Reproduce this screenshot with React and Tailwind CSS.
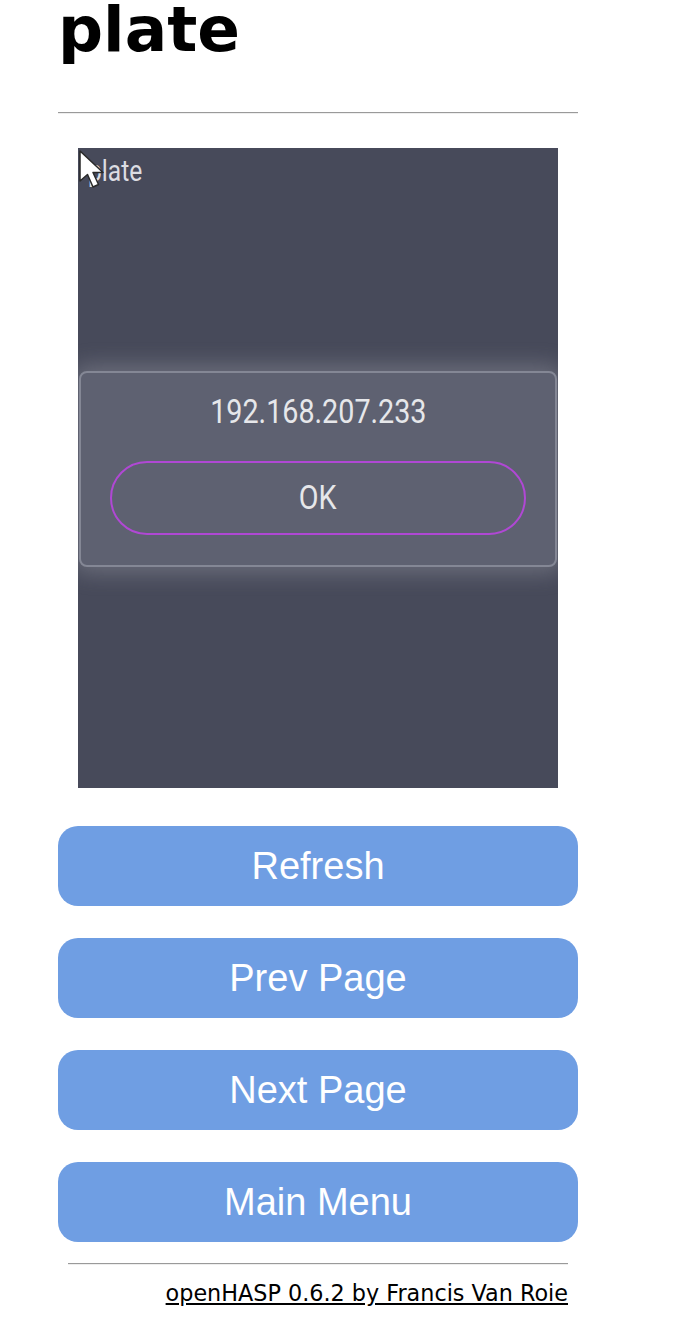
import React from "react";

function Cursor() {
  return (
    <svg width="30" height="42" viewBox="0 0 30 42" className="absolute left-[0px] top-[1px]">
      <path d="M2 2 L2 32 L9.5 25.5 L15 38 L20.5 35.5 L15 23.5 L25 23.5 Z" fill="#ffffff" stroke="#2a2a2a" strokeWidth="1.5" strokeLinejoin="round" />
    </svg>
  );
}

function Screen() {
  return (
    <div className="relative ml-[20px] mt-[34px] w-[480px] h-[640px] bg-[#474a5a] overflow-hidden">
      <div className="absolute left-[10px] top-[3px] text-[29px] text-[#dcdde2] font-['Roboto',sans-serif] origin-left scale-x-[0.85] leading-[40px]">
        plate
      </div>
      <Cursor />
      <div className="absolute left-[1px] top-[223px] w-[478px] h-[196px] rounded-[8px] bg-[#5e6171] border-2 border-[#848795] shadow-[0_0_22px_6px_rgba(200,200,210,0.28)]">
        <div className="mt-[19px] flex justify-center">
          <span className="inline-block text-[33px] leading-[40px] text-[#e6e7ea] font-['Roboto',sans-serif] scale-x-[0.87]">
            192.168.207.233
          </span>
        </div>
        <div className="ml-[29px] mt-[29px] w-[416px] h-[74px] rounded-full border-2 border-[#b048d4] flex items-center justify-center">
          <span className="inline-block text-[33px] leading-[40px] text-[#e6e7ea] font-['Roboto',sans-serif] scale-x-[0.87]">
            OK
          </span>
        </div>
      </div>
    </div>
  );
}

function Btn({ children }) {
  return (
    <div className="w-[520px] h-[80px] rounded-[20px] bg-[#6f9ee3] flex items-center justify-center text-white text-[38px] font-['Liberation_Sans',Arial,sans-serif]">
      {children}
    </div>
  );
}

export default function App() {
  return (
    <div className="w-[690px] h-[1340px] bg-white overflow-hidden">
      <div className="ml-[58px] w-[520px]">
        <h1 className="mt-[-2px] text-[63px] leading-[63px] font-bold text-black font-['DejaVu_Sans',Verdana,sans-serif]">
          plate
        </h1>
        <div className="mt-[51px] h-[2px] border-t border-t-[#9a9a9a] border-b border-b-[#eeeeee]" />
        <Screen />
        <div className="mt-[38px] flex flex-col gap-[32px]">
          <Btn>Refresh</Btn>
          <Btn>Prev Page</Btn>
          <Btn>Next Page</Btn>
          <Btn>Main Menu</Btn>
        </div>
        <div className="ml-[10px] mt-[21px] w-[500px] h-[2px] border-t border-t-[#9a9a9a] border-b border-b-[#eeeeee]" />
        <div className="mr-[10px] mt-[14px] text-right">
          <a href="#" className="text-[22.3px] leading-[28px] text-black underline font-['DejaVu_Sans',Verdana,sans-serif]">
            openHASP 0.6.2 by Francis Van Roie
          </a>
        </div>
      </div>
    </div>
  );
}
